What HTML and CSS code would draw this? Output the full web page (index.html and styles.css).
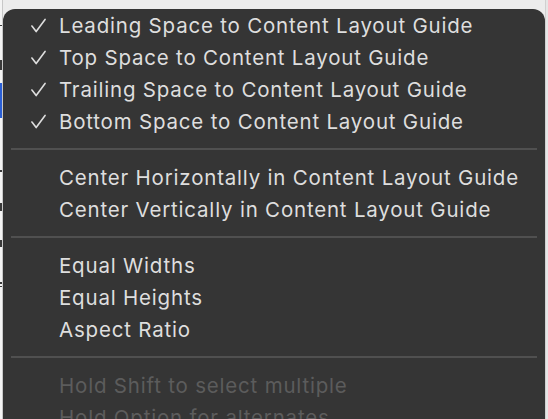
FILE: index.html
```html
<!DOCTYPE html>
<html>
<head>
<meta charset="utf-8">
<link rel="stylesheet" href="styles.css">
</head>
<body>
<div class="backdrop">
  <div class="edge-left">
    <span class="mark m1"></span>
    <span class="mark m2"></span>
    <span class="mark m3"></span>
    <span class="blue"></span>
    <span class="mark m4"></span>
    <span class="mark m5"></span>
    <span class="mark m6"></span>
    <span class="mark m7"></span>
  </div>
  <div class="edge-right"></div>
</div>
<div class="menu">
  <div class="item"><svg class="check" viewBox="0 0 16 16"><polyline points="1,8.5 5.5,14.5 15,1.5"/></svg><span>Leading Space to Content Layout Guide</span></div>
  <div class="item"><svg class="check" viewBox="0 0 16 16"><polyline points="1,8.5 5.5,14.5 15,1.5"/></svg><span>Top Space to Content Layout Guide</span></div>
  <div class="item"><svg class="check" viewBox="0 0 16 16"><polyline points="1,8.5 5.5,14.5 15,1.5"/></svg><span>Trailing Space to Content Layout Guide</span></div>
  <div class="item"><svg class="check" viewBox="0 0 16 16"><polyline points="1,8.5 5.5,14.5 15,1.5"/></svg><span>Bottom Space to Content Layout Guide</span></div>
  <div class="sep"></div>
  <div class="item"><span>Center Horizontally in Content Layout Guide</span></div>
  <div class="item"><span>Center Vertically in Content Layout Guide</span></div>
  <div class="sep"></div>
  <div class="item"><span>Equal Widths</span></div>
  <div class="item"><span>Equal Heights</span></div>
  <div class="item"><span>Aspect Ratio</span></div>
  <div class="sep"></div>
  <div class="item disabled"><span>Hold Shift to select multiple</span></div>
  <div class="item disabled"><span>Hold Option for alternates</span></div>
</div>
</body>
</html>
```
FILE: styles.css
```css
html, body {
  margin: 0;
  padding: 0;
  width: 548px;
  height: 419px;
  overflow: hidden;
  background: #ececec;
  font-family: Inter, "Noto Sans", sans-serif;
}

.backdrop {
  display: flex;
  justify-content: space-between;
  height: 419px;
}

.edge-left {
  position: relative;
  width: 3px;
  height: 419px;
  background: #f4f4f4;
  border-right: 1px solid #c8c8c8;
  box-sizing: border-box;
}

.mark {
  position: absolute;
  left: 0;
  width: 2px;
  background: #3a3a3a;
}
.m1 { top: 25px; height: 1px; }
.m2 { top: 60px; height: 10px; }
.m3 { top: 170px; height: 2px; }
.m4 { top: 203px; height: 8px; }
.m5 { top: 240px; height: 7px; }
.m6 { top: 282px; height: 2px; }
.m7 { top: 286px; height: 1px; }

.blue {
  position: absolute;
  left: 0;
  top: 83px;
  width: 2px;
  height: 35px;
  background: #2a5fd6;
}

.edge-right {
  width: 3px;
  height: 419px;
  background: #e6e6e6;
  border-left: 1px solid #d0d0d0;
  box-sizing: border-box;
}

.menu {
  position: absolute;
  left: 3px;
  top: 9px;
  width: 542px;
  height: 440px;
  background: #353535;
  border-radius: 12px 12px 0 0;
  padding-top: 0;
  box-sizing: border-box;
}

.item {
  position: relative;
  height: 32px;
  display: flex;
  align-items: center;
  padding-left: 56px;
  color: #dedede;
  font-size: 20.5px;
  letter-spacing: 0.8px;
  white-space: nowrap;
}

.item.disabled {
  color: #5c5c5c;
}

.check {
  position: absolute;
  left: 28px;
  top: 9px;
  width: 15px;
  height: 15px;
  fill: none;
  stroke: #dedede;
  stroke-width: 1.7;
  stroke-linecap: round;
  stroke-linejoin: round;
}

.sep {
  height: 24px;
  display: flex;
  align-items: center;
  padding: 0 8px;
}
.sep::before {
  content: "";
  flex: 1;
  height: 2px;
  background: #505050;
}
```
